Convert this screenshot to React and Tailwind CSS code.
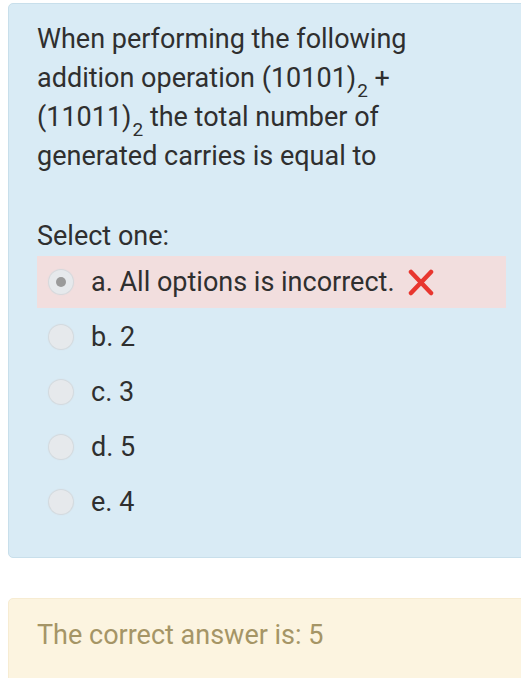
import React from "react";

const options = [
  { label: "a. All options is incorrect.", selected: true, wrong: true },
  { label: "b. 2" },
  { label: "c. 3" },
  { label: "d. 5" },
  { label: "e. 4" },
];

const Radio = ({ checked }) => (
  <span className="flex h-[24px] w-[24px] shrink-0 items-center justify-center rounded-full bg-[#e6e9ec] shadow-[0_0_1px_1px_#d3d8dc]">
    {checked && <span className="h-[10px] w-[10px] rounded-full bg-[#9a9a9a]" />}
  </span>
);

const Cross = () => (
  <svg width="26" height="27" viewBox="0 0 26 27" className="ml-[13px] shrink-0">
    <path d="M3 3 L23 24 M23 3 L3 24" stroke="#e8362f" strokeWidth="4.5" strokeLinecap="round" />
  </svg>
);

const Sub = ({ children }) => (
  <sub className="relative top-[4px] ml-[1px] align-sub text-[19px] leading-none">{children}</sub>
);

export default function App() {
  return (
    <div
      className="h-[678px] w-[521px] overflow-hidden bg-white text-[27px] leading-[39px] text-[#2f2f2f]"
      style={{ fontFamily: "Roboto, 'Liberation Sans', sans-serif" }}
    >
      <div className="ml-[8px] mt-[3px] w-[540px] rounded-[5px] border border-[#c8dfeb] bg-[#d9ebf5] pb-[29px] pl-[28px] pt-[16px]">
        <p className="w-[420px]">
          When performing the following addition operation (10101)<Sub>2</Sub> + (11011)<Sub>2</Sub> the total
          number of generated carries is equal to
        </p>
        <p className="mt-[41px]">Select one:</p>
        <div className="flex w-[469px] flex-col gap-[3px]">
          {options.map((o) => (
            <div
              key={o.label}
              className={`flex h-[52px] items-center pl-[12px] ${o.wrong ? "bg-[#f2dede]" : ""}`}
            >
              <Radio checked={o.selected} />
              <span className="ml-[18px]">{o.label}</span>
              {o.wrong && <Cross />}
            </div>
          ))}
        </div>
      </div>
      <div className="ml-[8px] mt-[40px] h-[120px] w-[540px] rounded-[5px] border border-[#f7ecd2] bg-[#fcf4e0] pl-[28px] pt-[17px] text-[#a59566]">
        The correct answer is: 5
      </div>
    </div>
  );
}
